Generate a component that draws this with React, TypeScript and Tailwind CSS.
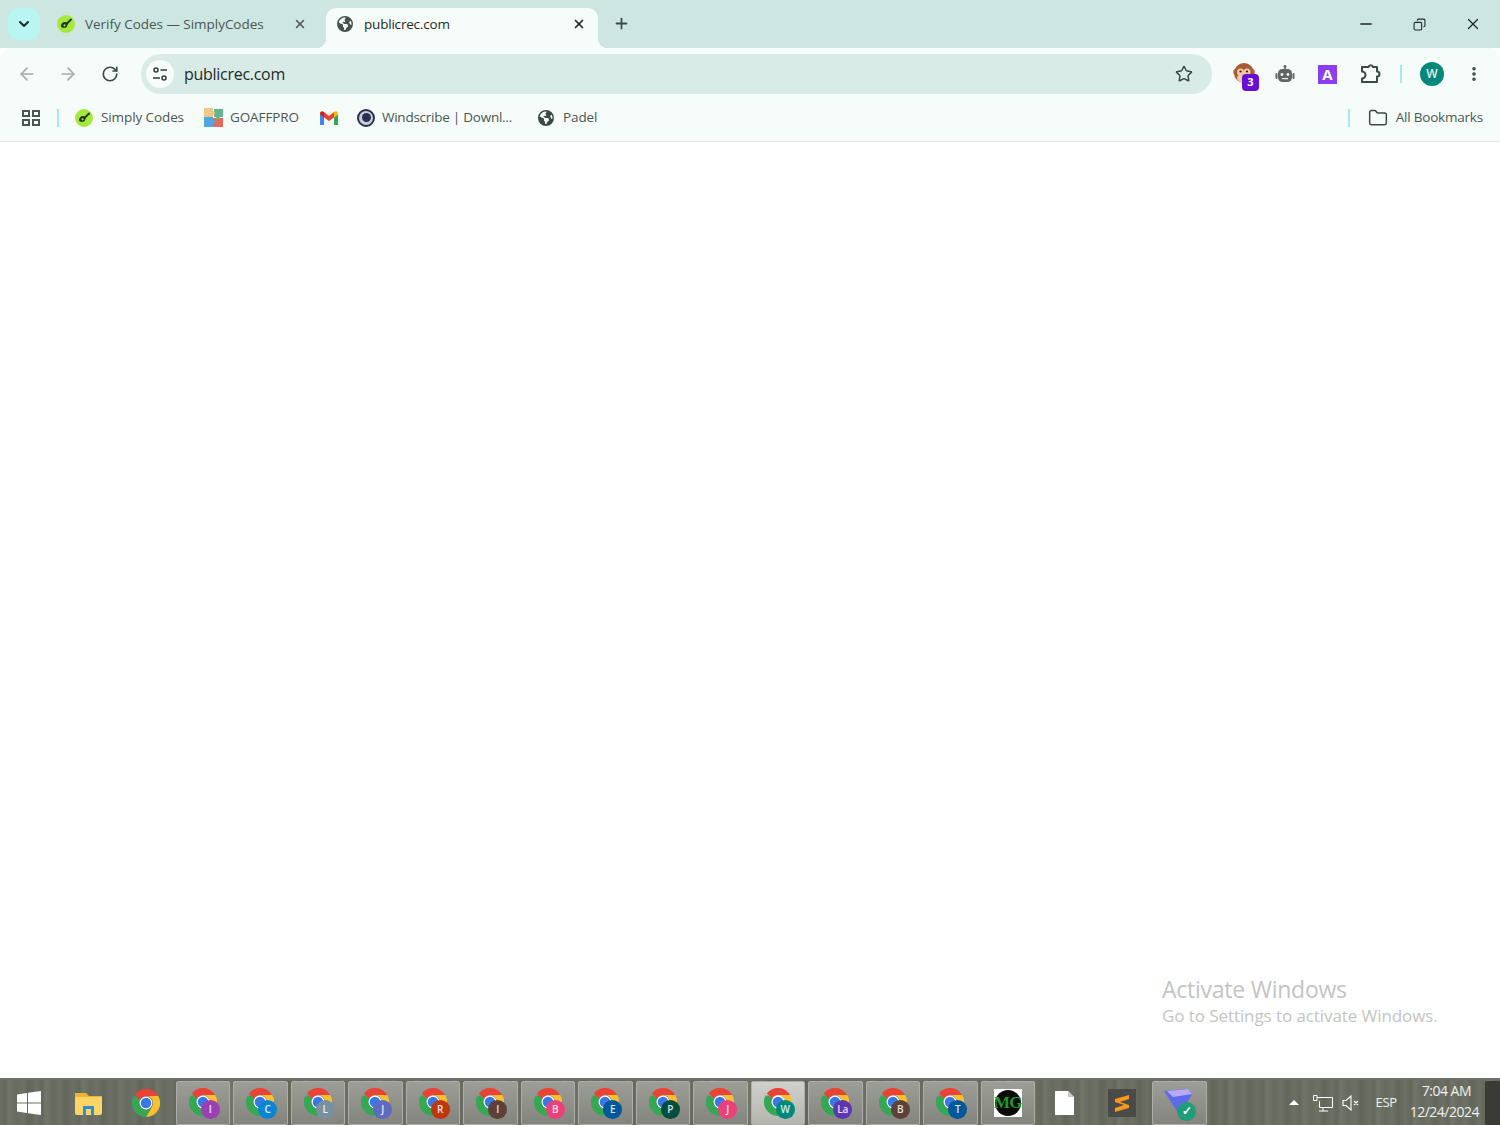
import { ArrowLeft, ArrowRight, ChevronDown, Copy, EllipsisVertical, Folder, Minus, Plus, RotateCw, Star, X } from "lucide-react";
import { FaEarthAmericas } from "react-icons/fa6";

const font = "font-['Open_Sans','Noto_Sans',sans-serif]";

function SimplyIcon({ size = 18 }: { size?: number }) {
  return (
    <svg width={size} height={size} viewBox="0 0 18 18" className="shrink-0">
      <circle cx="9" cy="9" r="9" fill="#a4e83c" />
      <path d="M4 11c0-2.500 2.500-4.500 5-3.700l2 1-1.300 3.700c-2.200 1.500-5.700 1-5.700-1z" fill="#1f3320" />
      <path d="M9.500 9 14 4.500" stroke="#1f3320" strokeWidth="1.800" strokeLinecap="round" />
      <circle cx="7.500" cy="10.300" r="1.100" fill="#a4e83c" />
    </svg>
  );
}

function ChromeIcon({ size = 28 }: { size?: number }) {
  return (
    <svg width={size} height={size} viewBox="0 0 48 48" className="shrink-0">
      <path d="M24 24 13.600 42 3.200 24A24 24 0 0 1 6 12z" fill="#34a853" />
      <path d="M4.800 9.600A24 24 0 0 1 44.800 12H24a12 12 0 0 0-10.400 6z" fill="#ea4335" />
      <path d="M24 12h20.800A24 24 0 0 1 24 48l10.400-18A12 12 0 0 0 24 12z" fill="#fbc02d" />
      <path d="M3.200 12A24 24 0 0 0 24 48l10.400-18A12 12 0 0 1 13.600 30z" fill="#34a853" />
      <circle cx="24" cy="24" r="11" fill="#fff" />
      <circle cx="24" cy="24" r="9" fill="#3b78e7" />
    </svg>
  );
}

function ProfileChrome({ letter, color }: { letter: string; color: string }) {
  return (
    <div className="relative h-[28px] w-[28px] -translate-y-[1px]">
      <ChromeIcon />
      <div
        className={`absolute -bottom-[3px] -right-[3px] flex h-[19px] w-[19px] items-center justify-center rounded-full text-[10px] font-semibold text-white/85 ${color}`}
      >
        {letter}
      </div>
    </div>
  );
}

const taskButtons = [
  { letter: "I", color: "bg-[#9c3fb5]" },
  { letter: "C", color: "bg-[#0a85d1]" },
  { letter: "L", color: "bg-[#7890a0]" },
  { letter: "J", color: "bg-[#5c6bc0]" },
  { letter: "R", color: "bg-[#bf360c]" },
  { letter: "I", color: "bg-[#5d4037]" },
  { letter: "B", color: "bg-[#ec407a]" },
  { letter: "E", color: "bg-[#01579b]" },
  { letter: "P", color: "bg-[#004d40]" },
  { letter: "J", color: "bg-[#ec407a]" },
  { letter: "W", color: "bg-[#00897b]", active: true },
  { letter: "La", color: "bg-[#5e35b1]" },
  { letter: "B", color: "bg-[#5d4037]" },
  { letter: "T", color: "bg-[#01579b]" },
];

function TaskButton({ active, children }: { active?: boolean; children: React.ReactNode }) {
  return (
    <div
      className={`mx-[1.500px] flex h-[44px] w-[54.500px] shrink-0 items-center justify-center rounded-[2px] border border-[#adaea8] bg-gradient-to-b ${
        active ? "from-[#d0d1cc] to-[#b4b5af]" : "from-[#9d9e98] to-[#83847d]"
      }`}
    >
      {children}
    </div>
  );
}

function Bookmark({ icon, label, className }: { icon: React.ReactNode; label: string; className: string }) {
  return (
    <div className={`flex shrink-0 items-center ${className}`}>
      {icon}
      <span className="text-[13.500px] tracking-[-0.1px] text-[#4b5654]">{label}</span>
    </div>
  );
}

export default function App() {
  return (
    <div className={`flex h-[1125px] w-[1500px] flex-col overflow-hidden bg-white ${font}`}>
      {/* tab strip */}
      <div className="flex h-[48px] shrink-0 items-start bg-[#cde6e1] pt-[8px]">
        <div className="ml-[8px] flex h-[32px] w-[32px] items-center justify-center rounded-[10px] bg-[#b9f6f1]">
          <ChevronDown size={16} strokeWidth={3} className="text-[#17302c]" />
        </div>
        <div className="ml-[17px] flex h-[32px] w-[252px] items-center">
          <SimplyIcon />
          <span className="ml-[10px] w-[200px] text-[13.500px] tracking-[-0.03px] whitespace-nowrap text-[#4b5654]">
            Verify Codes — SimplyCodes
          </span>
          <X size={14} strokeWidth={2.500} className="ml-[8px] text-[#4b5654]" />
        </div>
        <div className="relative ml-[17px] flex h-[40px] w-[272px] items-center rounded-t-[10px] bg-[#f6fcfa] pb-[8px] pl-[11px]">
          <div className="absolute -left-[10px] bottom-0 h-[10px] w-[10px] bg-[radial-gradient(circle_at_0_0,transparent_10px,#f6fcfa_10.500px)]" />
          <div className="absolute -right-[10px] bottom-0 h-[10px] w-[10px] bg-[radial-gradient(circle_at_100%_0,transparent_10px,#f6fcfa_10.500px)]" />
          <FaEarthAmericas size={16} className="text-[#47524f]" />
          <span className="ml-[11px] w-[208px] text-[13.500px] tracking-[-0.2px] text-[#1f2a28]">publicrec.com</span>
          <X size={14} strokeWidth={3} className="text-[#1f2a28]" />
        </div>
        <Plus size={17} strokeWidth={2.500} className="ml-[15px] mt-[7px] text-[#3c4a47]" />
        <div className="ml-auto flex h-[32px] items-center text-[#1f2a28]">
          <Minus size={18} strokeWidth={1.700} />
          <Copy size={13} strokeWidth={2} className="ml-[38px] -scale-x-100" />
          <X size={18} strokeWidth={1.600} className="ml-[38px] mr-[18px]" />
        </div>
      </div>

      {/* toolbar */}
      <div className="flex h-[48px] shrink-0 items-center rounded-t-[10px] bg-[#f6fcfa] pt-[4px]">
        <ArrowLeft size={20} strokeWidth={2} className="ml-[17px] text-[#a3adab]" />
        <ArrowRight size={20} strokeWidth={2} className="ml-[21px] text-[#a3adab]" />
        <RotateCw size={18} strokeWidth={2.200} className="ml-[23px] text-[#3c4a47]" />
        <div className="ml-[22px] flex h-[40px] w-[1071px] items-center rounded-full bg-[#d9ebe6] pl-[5px]">
          <div className="flex h-[28px] w-[28px] items-center justify-center rounded-full bg-[#f6fcfa]">
            <svg width="16" height="16" viewBox="0 0 16 16" fill="none" stroke="#2f3b39" strokeWidth="1.500">
              <circle cx="4" cy="4" r="2" />
              <path d="M8.500 4H15M1 12h7" />
              <circle cx="12" cy="12" r="2" />
            </svg>
          </div>
          <span className="ml-[10px] text-[16px] tracking-[-0.28px] text-[#1f2a28]">publicrec.com</span>
          <Star size={18} strokeWidth={2} className="ml-auto mr-[19px] text-[#3c4a47]" />
        </div>
        <div className="relative ml-[21px] h-[22px] w-[22px]">
          <svg width="22" height="22" viewBox="0 0 22 22">
            <circle cx="3" cy="9" r="3" fill="#d2835a" />
            <circle cx="19" cy="9" r="3" fill="#d2835a" />
            <circle cx="11" cy="10" r="10" fill="#a85a34" />
            <circle cx="7.500" cy="9" r="3.500" fill="#f3c9a5" />
            <circle cx="14" cy="9" r="3.500" fill="#f3c9a5" />
            <ellipse cx="10.500" cy="15" rx="6.500" ry="4.500" fill="#f3c9a5" />
            <circle cx="7.500" cy="8.500" r="1.100" fill="#3a2114" />
            <circle cx="14" cy="8.500" r="1.100" fill="#3a2114" />
          </svg>
          <div className="absolute -bottom-[6px] -right-[4px] flex h-[17px] w-[17px] items-center justify-center rounded-[4px] bg-[#6a0dd6] text-[11px] font-bold text-white">
            3
          </div>
        </div>
        <svg width="20" height="20" viewBox="0 0 20 20" className="ml-[20px]" fill="#5f6664">
          <circle cx="10" cy="2.500" r="1.500" />
          <rect x="9.300" y="3" width="1.400" height="3" />
          <rect x="3" y="5" width="14" height="13" rx="4.500" />
          <rect x="0.500" y="9" width="2" height="6" rx="1" />
          <rect x="17.500" y="9" width="2" height="6" rx="1" />
          <circle cx="7" cy="10.500" r="1.400" fill="#f6fcfa" />
          <circle cx="13" cy="10.500" r="1.400" fill="#f6fcfa" />
          <rect x="7" y="14" width="6" height="1.200" fill="#f6fcfa" />
        </svg>
        <div className="ml-[23px] flex h-[19px] w-[19px] items-center justify-center bg-[#8b3df0] text-[15px] font-bold text-white">
          A
        </div>
        <svg width="21" height="21" viewBox="0 0 21 21" className="ml-[23px]" fill="none" stroke="#3c4a47" strokeWidth="2" strokeLinejoin="round">
          <path d="M2 3h6.500a2.300 2.300 0 0 1 4.500 0h4v4.500a2.300 2.300 0 0 1 0 5V18H2v-3.500a2.800 2.800 0 0 0 0-7z" />
        </svg>
        <div className="ml-[19px] h-[18px] w-[2px] bg-[#a5ebe6]" />
        <div className="ml-[18px] flex h-[24px] w-[24px] items-center justify-center rounded-full bg-[#00897b] text-[12px] font-semibold text-white/90">
          W
        </div>
        <EllipsisVertical size={18} strokeWidth={2.800} className="ml-[21px] text-[#3c4a47]" />
      </div>

      {/* bookmarks bar */}
      <div className="flex h-[46px] shrink-0 items-center border-b border-[#e2e6e5] bg-[#f6fcfa] pb-[2px]">
        <svg width="18" height="16" viewBox="0 0 18 16" className="ml-[22px]" fill="none" stroke="#4b5654" strokeWidth="2">
          <rect x="1" y="1" width="6" height="5" />
          <rect x="11" y="1" width="6" height="5" />
          <rect x="1" y="10" width="6" height="5" />
          <rect x="11" y="10" width="6" height="5" />
        </svg>
        <div className="ml-[17px] h-[18px] w-[2px] bg-[#a5ebe6]" />
        <Bookmark className="ml-[16px] w-[129px] gap-[8px]" icon={<SimplyIcon />} label="Simply Codes" />
        <Bookmark
          className="w-[115px] gap-[7px]"
          icon={
            <svg width="19" height="19" viewBox="0 0 19 19" className="-mt-[1px] shrink-0">
              <rect width="9" height="9" fill="#f4c987" />
              <path d="M10 1h9v8h-9z" fill="#62b58f" />
              <rect y="9" width="9" height="10" fill="#4fa8de" />
              <rect x="9" y="10" width="10" height="9" fill="#e66a5c" />
              <circle cx="9" cy="5" r="2" fill="#f4c987" />
              <circle cx="14" cy="10" r="2" fill="#62b58f" />
              <circle cx="9" cy="14" r="2" fill="#4fa8de" />
            </svg>
          }
          label="GOAFFPRO"
        />
        <svg width="18" height="14" viewBox="0 0 18 14" className="ml-[1px] shrink-0">
          <path d="M0 3.500V14h4V6z" fill="#4285f4" />
          <path d="M14 6v8h4V3.500z" fill="#34a853" />
          <path d="M14 1v5.500l4-3V2.500C18 .5 15.500-.5 14 1z" fill="#fbbc04" />
          <path d="M4 6.500 9 10l5-3.500V1L9 5 4 1z" fill="#ea4335" />
          <path d="M0 2.500v1l4 3V1C2.500-.5 0 .5 0 2.500z" fill="#c5221f" />
        </svg>
        <div className="ml-[19px] flex h-[18px] w-[18px] shrink-0 items-center justify-center rounded-full border-2 border-[#2a3050] bg-[#c8cedc]">
          <div className="h-[9px] w-[9px] rounded-full bg-[#2a3050]" />
        </div>
        <span className="ml-[7px] w-[156px] text-[13.500px] tracking-[-0.25px] text-[#4b5654]">Windscribe | Downl...</span>
        <FaEarthAmericas size={16} className="shrink-0 text-[#3c4a47]" />
        <span className="ml-[9px] text-[13.500px] tracking-[-0.1px] text-[#4b5654]">Padel</span>
        <div className="ml-auto h-[18px] w-[2px] bg-[#a5ebe6]" />
        <Folder size={20} strokeWidth={1.800} className="ml-[18px] text-[#3c4a47]" />
        <span className="ml-[8px] mr-[17px] text-[13.500px] tracking-[-0.2px] text-[#4b5654]">All Bookmarks</span>
      </div>

      {/* page */}
      <div className="relative min-h-0 flex-1 bg-white">
        <div className="absolute left-[1162px] top-[832px] text-[#c4c4c4]">
          <div className="text-[23px] leading-[30px] tracking-[-0.25px]">Activate Windows</div>
          <div className="text-[17px] leading-[24px] tracking-[-0.08px]">Go to Settings to activate Windows.</div>
        </div>
      </div>

      {/* taskbar */}
      <div className="flex h-[47px] shrink-0 items-center border-t-2 border-[#6f716c] bg-[#696c62] bg-[repeating-linear-gradient(90deg,#6b6f63_0px,#64685c_5px,#72756a_9px,#676b5f_16px,#6e7166_23px,#62665a_29px,#6d7065_37px)]">
        <div className="flex w-[58px] shrink-0 justify-center">
          <svg width="24" height="24" viewBox="0 0 24 24" fill="#fff">
            <path d="M0 3.500 10 2v9.500H0zM11 1.800 24 0v11.500H11zM0 12.500h10V22L0 20.500zM11 12.500h13V24l-13-1.800z" />
          </svg>
        </div>
        <div className="flex w-[60px] shrink-0 justify-center">
          <svg width="27" height="24" viewBox="0 0 27 24">
            <path d="M0 2h11l3 3h13v6H0z" fill="#f2b233" />
            <path d="M0 6h27v16a2 2 0 0 1-2 2H2a2 2 0 0 1-2-2z" fill="#fbd667" />
            <path d="M8 24v-9h11v9h-3v-6h-5v6z" fill="#2a8fdc" />
          </svg>
        </div>
        <div className="flex w-[56px] shrink-0 justify-center">
          <ChromeIcon />
        </div>
        {taskButtons.map((b, i) => (
          <TaskButton key={i} active={b.active}>
            <ProfileChrome letter={b.letter} color={b.color} />
          </TaskButton>
        ))}
        <TaskButton>
          <div className="flex h-[28px] w-[28px] items-center justify-center overflow-hidden bg-white">
            <div className="flex h-[26px] w-[26px] items-center justify-center rounded-full bg-[#0a0a0a] font-['Liberation_Serif',serif] text-[17px] font-bold tracking-[-1px] text-[#1f9a22]">
              MG
            </div>
          </div>
        </TaskButton>
        <div className="flex w-[56px] shrink-0 justify-center">
          <svg width="19" height="24" viewBox="0 0 19 24">
            <path d="M0 0h13l6 6v18H0z" fill="#fff" />
            <path d="M13 0v6h6z" fill="#c9c9c9" />
          </svg>
        </div>
        <div className="flex w-[58px] shrink-0 justify-center">
          <div className="flex h-[28px] w-[28px] items-center justify-center bg-[#4a4a48]">
            <svg width="14" height="18" viewBox="0 0 14 18" fill="#f89820">
              <path d="M14 1v4L5 8l9 3v3L0 18v-4l9-3-9-3V5z" />
            </svg>
          </div>
        </div>
        <TaskButton>
          <div className="relative h-[30px] w-[30px]">
            <svg width="28" height="28" viewBox="0 0 28 28">
              <path d="M0 3 24 1l4 5-12 22z" fill="#5f6ae8" />
              <path d="M3 3 24 1l4 5-19 3z" fill="#b9a7f8" />
            </svg>
            <div className="absolute -bottom-[3px] -right-[2px] flex h-[19px] w-[19px] items-center justify-center rounded-full bg-[#1d9d78] text-[12px] font-bold text-white">
              ✓
            </div>
          </div>
        </TaskButton>
        <div className="ml-auto flex items-center text-white">
          <div className="h-0 w-0 border-x-[5px] border-b-[5px] border-x-transparent border-b-white" />
          <svg width="20" height="18" viewBox="0 0 20 18" className="ml-[14px]" fill="none" stroke="#fff" strokeWidth="1">
            <path d="M4 1.500H0.500v5h3.500zM4 3.500h15.500v10h-13V7M10 13.500V17M6 17h9" />
          </svg>
          <svg width="18" height="16" viewBox="0 0 18 16" className="ml-[9px]" fill="none" stroke="#fff" strokeWidth="1.100">
            <path d="M1 5.500h3L9 1v14l-5-4.500H1zM12 6l4 4M16 6l-4 4" />
          </svg>
          <span className="ml-[15px] text-[13px] tracking-[-0.2px] text-white/90">ESP</span>
          <div className="ml-[14px] -mt-[4px] flex w-[68px] flex-col items-end text-[14px] leading-[21px] tracking-[-0.5px] text-white/90">
            <span className="mr-[8px]">7:04 AM</span>
            <span>12/24/2024</span>
          </div>
          <div className="ml-[6px] h-[44px] w-[15px] rounded-l-[2px] bg-[#3a3b36]" />
        </div>
      </div>
    </div>
  );
}
